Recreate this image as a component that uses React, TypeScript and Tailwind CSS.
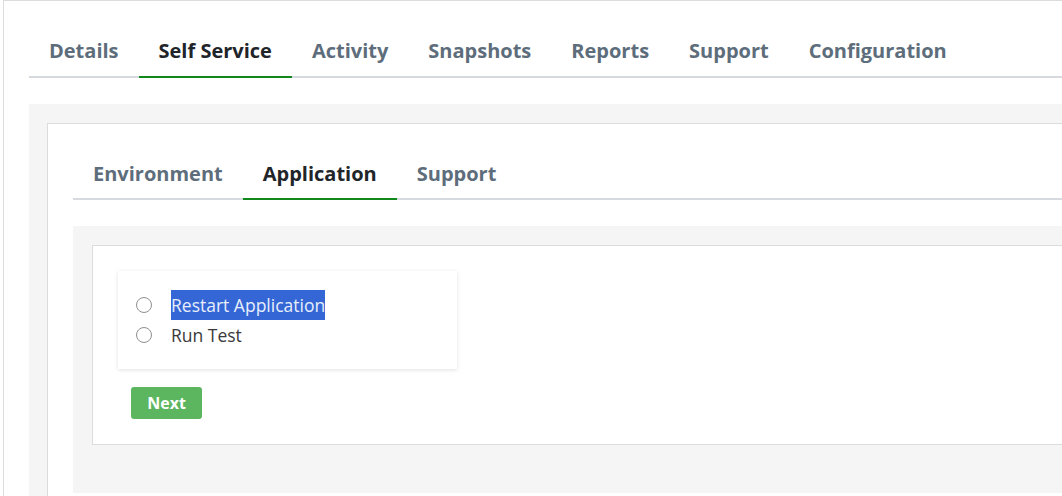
import React, { useState } from 'react';

const topTabs = ['Details', 'Self Service', 'Activity', 'Snapshots', 'Reports', 'Support', 'Configuration'];
const subTabs = ['Environment', 'Application', 'Support'];

const Tabs = ({ items, active, pb }: { items: string[]; active: string; pb: string }) => (
  <div className="flex border-b-2 border-[#d6d9dd]">
    {items.map((t) => (
      <div
        key={t}
        className={
          (t === active
            ? 'text-[#212529] border-[#11881a] '
            : 'text-[#5d6d7b] border-transparent ') +
          'px-[20px] pt-[36px] leading-[28px] text-[20px] font-bold border-b-2 -mb-[2px] ' +
          pb
        }
      >
        {t}
      </div>
    ))}
  </div>
);

const App = () => {
  const [choice, setChoice] = useState<string | null>(null);
  const options = ['Restart Application', 'Run Test'];

  return (
    <div className="h-[496px] overflow-hidden bg-white pl-[3px] font-['Open_Sans',sans-serif]">
      <div className="h-full border-t border-l border-[#dcdcdc] pl-[25px]">
        <Tabs items={topTabs} active="Self Service" pb="pb-[11px]" />

        {/* grey content area */}
        <div className="mt-[26px] bg-[#f5f5f5] pl-[18px] pt-[19px] h-full">
          <div className="border border-[#dcdcdc] border-r-0 bg-white pl-[25px] h-full">
            <Tabs items={subTabs} active="Application" pb="pb-[10px]" />

            <div className="mt-[26px] bg-[#f5f5f5] pl-[19px] pt-[19px] pb-[48px]">
              <div className="border border-[#dcdcdc] border-r-0 bg-white pl-[25px] pt-[25px] pb-[25px]">
                <div className="w-[339px] bg-white pl-[18px] py-[19px] shadow-[0_1px_4px_rgba(0,0,0,0.12)]">
                  {options.map((o, i) => (
                    <label key={o} className="flex items-center h-[30px] cursor-pointer">
                      <span
                        onClick={() => setChoice(o)}
                        className="w-[16px] h-[16px] rounded-full border-[1.5px] border-[#8f8f8f] bg-white flex items-center justify-center"
                      >
                        {choice === o && <span className="w-[8px] h-[8px] rounded-full bg-[#555]" />}
                      </span>
                      <span
                        className={
                          i === 0
                            ? 'ml-[19px] text-[17.5px] leading-[30px] bg-[#3467d5] text-[#e8eefb]'
                            : 'ml-[19px] text-[17.5px] leading-[30px] text-[#3a3a3a]'
                        }
                      >
                        {o}
                      </span>
                    </label>
                  ))}
                </div>
                <button className="ml-[13px] mt-[18px] w-[71px] h-[32px] rounded-[3px] bg-[#5cb660] text-white text-[16px] font-bold">
                  Next
                </button>
              </div>
            </div>
          </div>
        </div>
      </div>
    </div>
  );
};

export default App;
